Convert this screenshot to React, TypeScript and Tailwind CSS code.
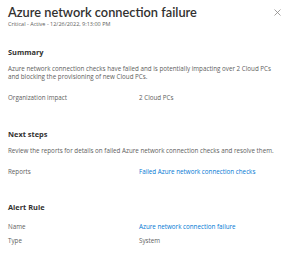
import React from 'react';

const Row = ({ label, value, link = false }: { label: string; value: string; link?: boolean }) => (
  <div className="flex h-[14px] items-center whitespace-nowrap">
    <span className="w-[131px] text-[#605e5c]">{label}</span>
    <span className={link ? 'text-[#0078d4]' : 'text-[#605e5c]'}>{value}</span>
  </div>
);

const Heading = ({ children, className = '' }: { children: React.ReactNode; className?: string }) => (
  <h2 className={`text-[7.4px] leading-[10px] font-bold text-[#323130] ${className}`}>{children}</h2>
);

export default function App() {
  return (
    <div
      className="w-[300px] h-[260px] bg-white overflow-hidden px-[8px] text-[6.25px] leading-[8px] text-[#605e5c]"
      style={{ fontFamily: '"Open Sans", "Noto Sans", sans-serif' }}
    >
      <div className="flex items-start justify-between pt-[3px]">
        <div>
          <h1
            className="text-[12.8px] leading-[18px] font-semibold text-[#323130] whitespace-nowrap"
            style={{ fontFamily: 'Lato, "Open Sans", sans-serif' }}
          >
            Azure network connection failure
          </h1>
          <p className="text-[5.5px] leading-[7px] text-[#605e5c] whitespace-nowrap">Critical - Active - 12/26/2022, 9:13:00 PM</p>
        </div>
        <svg className="mt-[6px] mr-[11px]" width="7" height="7" viewBox="0 0 7 7" fill="none" stroke="#8a8886" strokeWidth="0.8">
          <path d="M0.5 0.5 L6.5 6.5 M6.5 0.5 L0.5 6.5" />
        </svg>
      </div>

      <Heading className="mt-[19px]">Summary</Heading>
      <p className="mt-[8px] whitespace-nowrap">
        Azure network connection checks have failed and is potentially impacting over 2 Cloud PCs
        <br />
        and blocking the provisioning of new Cloud PCs.
      </p>
      <div className="mt-[10px]">
        <Row label="Organization impact" value="2 Cloud PCs" />
      </div>

      <Heading className="mt-[24px]">Next steps</Heading>
      <p className="mt-[8px] whitespace-nowrap">
        Review the reports for details on failed Azure network connection checks and resolve them.
      </p>
      <div className="mt-[10px]">
        <Row label="Reports" value="Failed Azure network connection checks" link />
      </div>

      <Heading className="mt-[23px]">Alert Rule</Heading>
      <div className="mt-[8px]">
        <Row label="Name" value="Azure network connection failure" link />
        <Row label="Type" value="System" />
      </div>
    </div>
  );
}
